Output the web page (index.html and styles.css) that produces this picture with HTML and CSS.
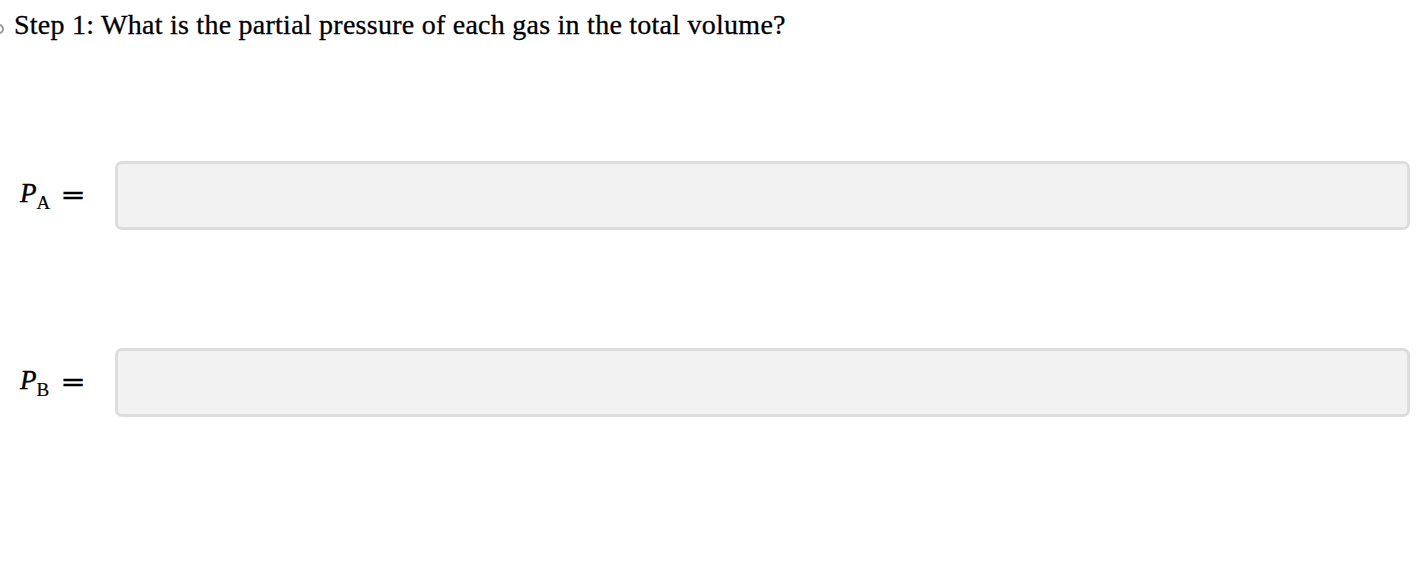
FILE: index.html
```html
<!DOCTYPE html>
<html>
<head>
<meta charset="utf-8">
<link rel="stylesheet" href="styles.css">
</head>
<body>
<div class="page">
  <div class="heading">
    <span class="dot"></span>
    <span class="title">Step 1: What is the partial pressure of each gas in the total volume?</span>
  </div>
  <div class="row row-a">
    <div class="label"><i>P</i><sub>A</sub></div>
    <div class="eq"><span>=</span></div>
    <div class="field"></div>
  </div>
  <div class="row row-b">
    <div class="label"><i>P</i><sub>B</sub></div>
    <div class="eq"><span>=</span></div>
    <div class="field"></div>
  </div>
</div>
</body>
</html>
```
FILE: styles.css
```css
html, body {
  margin: 0;
  padding: 0;
  background: #ffffff;
}
body {
  font-family: "Liberation Serif", "Times New Roman", serif;
  color: #000;
}
.page {
  width: 1424px;
  height: 576px;
  overflow: hidden;
}
.heading {
  display: flex;
  align-items: center;
  height: 50px;
}
.dot {
  width: 10px;
  height: 10px;
  border: 2px solid #999;
  border-radius: 50%;
  margin-left: -6px;
  margin-top: 8px;
  margin-right: 10px;
  box-sizing: border-box;
}
.title {
  font-size: 28px;
  letter-spacing: 0.25px;
  line-height: 50px;
  -webkit-text-stroke: 0.3px #000;
}
.row {
  display: flex;
  align-items: center;
  padding-left: 20px;
  padding-right: 14px;
}
.row-a {
  margin-top: 111px;
}
.row-b {
  margin-top: 118px;
}
.label {
  font-size: 27px;
  width: 42px;
  line-height: 1;
  -webkit-text-stroke: 0.4px #000;
}
.label sub {
  font-size: 19px;
  vertical-align: -7px;
  -webkit-text-stroke: 0.2px #000;
}
.eq {
  width: 53px;
  font-size: 28px;
  font-weight: bold;
  line-height: 1;
}
.eq span {
  display: inline-block;
  transform: scaleX(1.4);
  transform-origin: left center;
  -webkit-text-stroke: 0.7px #000;
}
.field {
  flex: 1;
  height: 63px;
  background: #f2f2f2;
  border: 3px solid #dddddd;
  border-radius: 7px;
}
```
